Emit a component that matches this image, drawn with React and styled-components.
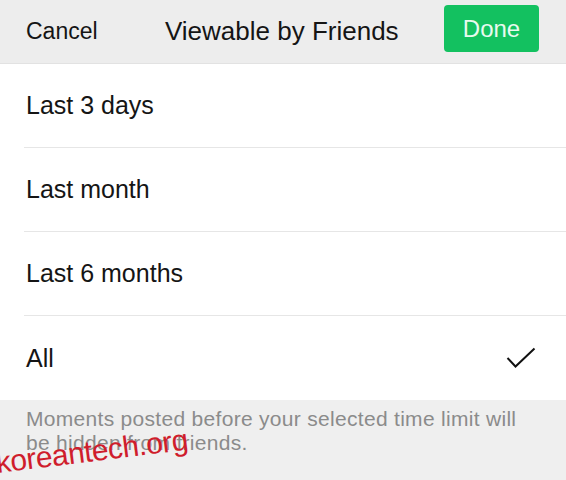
import React from 'react';
import styled, { createGlobalStyle } from 'styled-components';

const GlobalStyle = createGlobalStyle`
    html, body {
        margin: 0;
        padding: 0;
        background: #ededed;
    }
    * {
        box-sizing: border-box;
    }
`

const Tela = styled.div`
    position: relative;
    width: 566px;
    height: 480px;
    overflow: hidden;
    display: flex;
    flex-direction: column;
    font-family: "Liberation Sans", Arial, sans-serif;
    background: #ededed;
    color: #111;
`

const Cabecalho = styled.div`
    height: 64px;
    display: flex;
    align-items: center;
    padding: 0 26px 0 26px;
    background: #ededed;
    border-bottom: 1px solid #e2e2e2;
    position: relative;
`

const Cancelar = styled.span`
    font-size: 23px;
    color: #151515;
`

const Titulo = styled.span`
    flex: 1;
    text-align: center;
    font-size: 26px;
    color: #151515;
    padding-left: 22px;
`

const BotaoPronto = styled.button`
    width: 95px;
    height: 47px;
    margin-right: 1px;
    margin-top: -6px;
    border: none;
    border-radius: 4px;
    background: #13c160;
    color: #e8faef;
    font-family: inherit;
    font-size: 24px;
`

const Lista = styled.div`
    background: #fff;
`

const Linha = styled.div`
    height: 84px;
    display: flex;
    align-items: center;
    justify-content: space-between;
    margin-left: 24px;
    padding: 0 30px 0 2px;
    border-bottom: ${props => props.ultima ? 'none' : '1px solid #e6e6e6'};
`

const TextoLinha = styled.span`
    font-size: 25px;
    color: #151515;
`

const Rodape = styled.div`
    flex: 1;
    background: #efefef;
    padding: 7px 26px;
    font-size: 21px;
    letter-spacing: 0.3px;
    line-height: 24px;
    color: #8b8b8b;
`

const MarcaDagua = styled.div`
    position: absolute;
    left: -2px;
    top: 446px;
    font-size: 30px;
    color: #cf1d2c;
    transform: rotate(-7deg);
    transform-origin: left bottom;
    letter-spacing: -0.5px;
`

const Check = () => (
    <svg width="30" height="22" viewBox="0 0 30 22">
        <path d="M1.5 11 L9.5 19.5 L28.5 1.5" fill="none" stroke="#111" strokeWidth="2" />
    </svg>
)

const opcoes = ['Last 3 days', 'Last month', 'Last 6 months', 'All']

function App() {
    return (
        <Tela>
            <GlobalStyle />
            <Cabecalho>
                <Cancelar>Cancel</Cancelar>
                <Titulo>Viewable by Friends</Titulo>
                <BotaoPronto>Done</BotaoPronto>
            </Cabecalho>
            <Lista>
                {opcoes.map((o, i) => (
                    <Linha key={o} ultima={i === opcoes.length - 1}>
                        <TextoLinha>{o}</TextoLinha>
                        {o === 'All' && <Check />}
                    </Linha>
                ))}
            </Lista>
            <Rodape>
                Moments posted before your selected time limit will be hidden from friends.
            </Rodape>
            <MarcaDagua>koreantech.org</MarcaDagua>
        </Tela>
    )
}

export default App;
